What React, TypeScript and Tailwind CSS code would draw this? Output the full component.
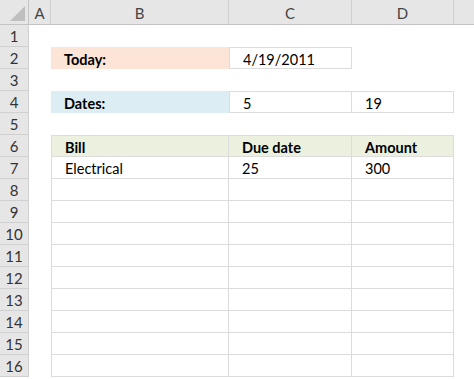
import React from "react";

type Cell = { text?: string; bold?: boolean; bg?: string; boxed?: boolean };

const cols = ["A", "B", "C", "D", ""];
const colW = ["w-[22px]", "w-[178px]", "w-[123px]", "w-[102px]", "flex-1"];

// rows keyed by row number; index 0..4 = columns A..E
const sheet: Record<number, Record<number, Cell>> = {
  2: {
    1: { text: "Today:", bold: true, bg: "bg-[#fce4d6]" },
    2: { text: "4/19/2011", boxed: true },
  },
  4: {
    1: { text: "Dates:", bold: true, bg: "bg-[#ddedf4]" },
    2: { text: "5", boxed: true },
    3: { text: "19", boxed: true },
  },
  6: {
    1: { text: "Bill", bold: true, bg: "bg-[#ebf1de]", boxed: true },
    2: { text: "Due date", bold: true, bg: "bg-[#ebf1de]", boxed: true },
    3: { text: "Amount", bold: true, bg: "bg-[#ebf1de]", boxed: true },
  },
  7: {
    1: { text: "Electrical", boxed: true },
    2: { text: "25", boxed: true },
    3: { text: "300", boxed: true },
  },
};

for (let r = 8; r <= 16; r++) {
  sheet[r] = { 1: { boxed: true }, 2: { boxed: true }, 3: { boxed: true } };
}

const SheetCell = ({ r, c, w }: { r: number; c: number; w: string }) => {
  const cell = sheet[r]?.[c];
  let borders = "";
  if (cell?.boxed) {
    borders = "border-r border-b border-[#dcdcdc]";
    if (!sheet[r]?.[c - 1]?.boxed) borders += " border-l";
    if (!sheet[r - 1]?.[c]?.boxed) borders += " border-t";
  }
  return (
    <div
      className={`${w} h-[22px] shrink-0 flex items-center pl-[13px] pt-[3px] text-[14.5px] text-black ${cell?.bg || "bg-white"} ${borders} ${cell?.bold ? "font-bold" : ""}`}
    >
      {cell?.text}
    </div>
  );
};

export default function App() {
  const rows = Array.from({ length: 16 }, (_, i) => i + 1);
  return (
    <div
      className="w-[474px] h-[379px] overflow-hidden bg-white"
      style={{ fontFamily: "Lato, 'Liberation Sans', sans-serif" }}
    >
      {/* column headers */}
      <div className="flex h-[25px] bg-[#e6e6e6] border-b border-[#c4c4c4]">
        <div className="w-[29px] shrink-0 relative border-r border-[#c6c6c6]">
          <svg className="absolute right-[3px] bottom-[3px]" width="15" height="15" viewBox="0 0 15 15">
            <polygon points="15,0 15,15 0,15" fill="#bfbfbf" />
          </svg>
        </div>
        {cols.map((c, i) => (
          <div
            key={i}
            className={`${colW[i]} shrink-0 flex items-center justify-center pt-[2px] text-[15px] text-[#444] ${i < 4 ? "border-r border-[#d0d0d0]" : ""}`}
          >
            {c}
          </div>
        ))}
      </div>

      {rows.map((r) => (
        <div key={r} className="flex">
          <div className="w-[29px] h-[22px] shrink-0 bg-[#e6e6e6] border-r border-b border-[#d0d0d0] flex items-center justify-center pt-[2px] text-[15px] text-[#333]">
            {r}
          </div>
          {colW.map((w, i) => (
            <SheetCell key={i} r={r} c={i} w={w} />
          ))}
        </div>
      ))}
    </div>
  );
}
